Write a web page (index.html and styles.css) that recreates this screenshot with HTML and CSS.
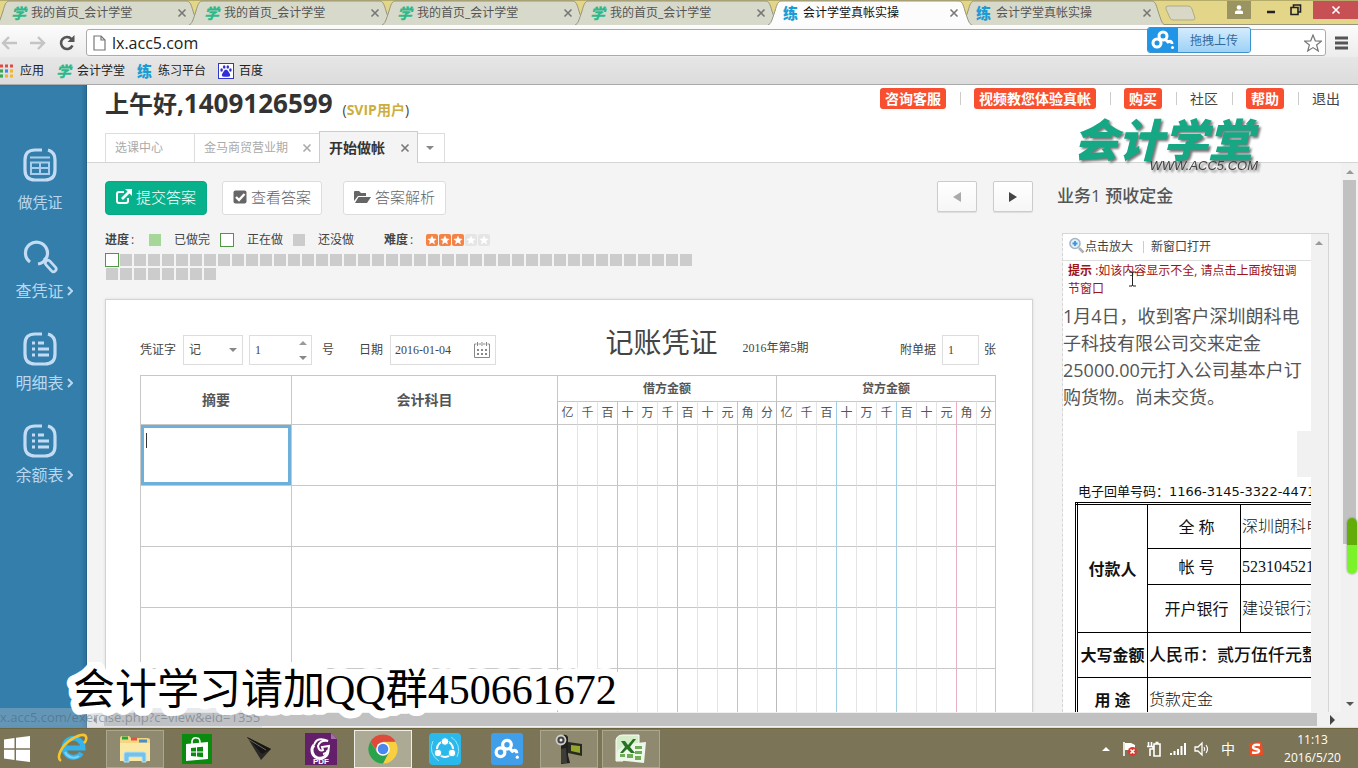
FILE: index.html
```html
<!DOCTYPE html>
<html lang="zh-CN">
<head>
<meta charset="utf-8">
<title>会计学堂真帐实操</title>
<link rel="stylesheet" href="styles.css">
</head>
<body>
<svg class="defs" aria-hidden="true">
  <symbol id="tab-shape" viewBox="0 0 204 25" preserveAspectRatio="none"><path d="M0 25C3 24 4 20 7 11C9 4 10 1 14 1H190C194 1 195 4 197 11C200 20 201 24 204 25" stroke="#98967e"/></symbol>
  <symbol id="cross" viewBox="0 0 10 10"><path d="M1.500 1.500L8.500 8.500M8.500 1.500L1.500 8.500" fill="none" stroke="currentColor" stroke-width="1.600"/></symbol>
  <symbol id="list-icon" viewBox="0 0 36 36"><path d="M20 3H13Q3 3 3 13V23Q3 33 13 33H23Q33 33 33 23V13Q33 5 26 3" fill="none" stroke="#c3dcf3" stroke-width="3.200"/><path d="M10 12h3M16 12h6M10 18h3M16 18h11M10 24h3M16 24h11" stroke="#c3dcf3" stroke-width="2.800"/></symbol>
  <symbol id="star" viewBox="0 0 10 10"><path d="M5 .5L6.300 3.600L9.600 3.900L7.100 6.100L7.900 9.400L5 7.600L2.100 9.400L2.900 6.100L.4 3.900L3.700 3.600Z"/></symbol>
  <symbol id="cloud" viewBox="0 0 24 20"><g fill="none" stroke="#fff" stroke-width="3"><circle cx="6" cy="13" r="4"/><circle cx="12" cy="6" r="4"/><path d="M14 9L17 12Q21 10 21 14"/></g><circle cx="21.500" cy="17.500" r="1.500" fill="#fff"/></symbol>
</svg>

<header class="browser">
  <div class="tabstrip">
    <div class="btab"><svg class="btab-bg"><use href="#tab-shape"/></svg><span class="fav xue">学</span><span class="btab-text">我的首页_会计学堂</span><button class="x" aria-label="关闭"><svg><use href="#cross"/></svg></button></div>
    <div class="btab"><svg class="btab-bg"><use href="#tab-shape"/></svg><span class="fav xue">学</span><span class="btab-text">我的首页_会计学堂</span><button class="x" aria-label="关闭"><svg><use href="#cross"/></svg></button></div>
    <div class="btab"><svg class="btab-bg"><use href="#tab-shape"/></svg><span class="fav xue">学</span><span class="btab-text">我的首页_会计学堂</span><button class="x" aria-label="关闭"><svg><use href="#cross"/></svg></button></div>
    <div class="btab"><svg class="btab-bg"><use href="#tab-shape"/></svg><span class="fav xue">学</span><span class="btab-text">我的首页_会计学堂</span><button class="x" aria-label="关闭"><svg><use href="#cross"/></svg></button></div>
    <div class="btab current"><svg class="btab-bg"><use href="#tab-shape"/></svg><span class="fav lian">练</span><span class="btab-text">会计学堂真帐实操</span><button class="x" aria-label="关闭"><svg><use href="#cross"/></svg></button></div>
    <div class="btab"><svg class="btab-bg"><use href="#tab-shape"/></svg><span class="fav lian">练</span><span class="btab-text">会计学堂真帐实操</span><button class="x" aria-label="关闭"><svg><use href="#cross"/></svg></button></div>
    <button class="newtab" aria-label="新标签页"><svg width="34" height="18" viewBox="0 0 34 18"><path d="M5 2H25Q28 2 29 5L32 14Q32 16 30 16H10Q8 16 7 14L3 5Q2 2 5 2Z" fill="#d9d8c6" stroke="#b0ab86"/></svg></button>
    <div class="winctl">
      <button class="user" aria-label="用户"><svg width="10" height="10" viewBox="0 0 10 10"><circle cx="5" cy="2.500" r="2.300" fill="#fff"/><path d="M1 9V7Q1 5.500 3 5.500H7Q9 5.500 9 7V9Z" fill="#fff"/></svg></button>
      <button class="min" aria-label="最小化"><svg width="10" height="10" viewBox="0 0 10 10"><path d="M1 7H9" stroke="#222" stroke-width="2.500"/></svg></button>
      <button class="max" aria-label="还原"><svg width="12" height="12" viewBox="0 0 12 12"><path d="M1 3.500H8V10.500H1ZM3.500 3V1H10.500V8H8.500" fill="none" stroke="#222" stroke-width="1.600"/></svg></button>
      <button class="close" aria-label="关闭窗口"><svg><use href="#cross"/></svg></button>
    </div>
  </div>
  <div class="navbar">
    <button class="nav" aria-label="后退"><svg width="18" height="16" viewBox="0 0 18 16"><path d="M9 2L3 8L9 14M3 8H17" fill="none" stroke="#c4c4c6" stroke-width="2.400"/></svg></button>
    <button class="nav" aria-label="前进"><svg width="18" height="16" viewBox="0 0 18 16"><path d="M9 2L15 8L9 14M15 8H1" fill="none" stroke="#c4c4c6" stroke-width="2.400"/></svg></button>
    <button class="nav" aria-label="刷新"><svg width="18" height="18" viewBox="0 0 18 18"><path d="M14.500 11.500A6 6 0 1 1 13.500 5" fill="none" stroke="#555" stroke-width="2.600"/><path d="M16.500 1V8H9.500Z" fill="#555"/></svg></button>
    <div class="omnibox">
      <svg width="13" height="16" viewBox="0 0 13 16"><path d="M1 1H8L12 5V15H1ZM8 1V5H12" fill="#fff" stroke="#777" stroke-width="1.200"/></svg>
      <input type="text" aria-label="地址" value="lx.acc5.com">
      <svg width="18" height="18" viewBox="0 0 18 18"><path d="M9 1L11.300 6.800L17.400 7.100L12.600 11L14.300 17L9 13.600L3.700 17L5.400 11L.6 7.100L6.700 6.800Z" fill="#fff" stroke="#777" stroke-width="1.200"/></svg>
      <button class="upload"><span class="upload-icon"><svg width="24" height="20"><use href="#cloud"/></svg></span><span class="upload-text">拖拽上传</span></button>
    </div>
    <button class="menu" aria-label="菜单"><svg width="14" height="14" viewBox="0 0 14 14"><path d="M0 2H13M0 7H13M0 12H13" stroke="#555" stroke-width="3"/></svg></button>
  </div>
  <nav class="bookmarks">
    <a href="#"><svg width="16" height="14" viewBox="0 0 16 14"><g stroke-width="3.200"><path d="M0 2H3M5 2H8M10 2H13" stroke="#de4b43"/><path d="M0 7H3" stroke="#3aa757"/><path d="M5 7H8" stroke="#4285f4"/><path d="M10 7H13" stroke="#f2b52f"/><path d="M0 12H3" stroke="#3aa757"/><path d="M5 12H8M10 12H13" stroke="#f2b52f"/></g></svg>应用</a>
    <a href="#"><span class="fav xue">学</span>会计学堂</a>
    <a href="#"><span class="fav lian">练</span>练习平台</a>
    <a href="#"><svg width="16" height="16" viewBox="0 0 16 16"><rect x=".5" y=".5" width="15" height="15" fill="#fff" stroke="#3238c8"/><g fill="#3030d8"><ellipse cx="3.600" cy="7" rx="1.300" ry="1.800"/><ellipse cx="6.200" cy="4" rx="1.300" ry="1.800"/><ellipse cx="9.800" cy="4" rx="1.300" ry="1.800"/><ellipse cx="12.400" cy="7" rx="1.300" ry="1.800"/><path d="M8 6.500Q10 7 11 9.500Q13 12 11.500 13.500Q8 14 4.500 13.500Q3 12 5 9.500Q6 7 8 6.500Z"/></g></svg>百度</a>
  </nav>
</header>

<div class="viewport">
  <nav class="sidebar">
    <a href="#"><svg class="side-icon" viewBox="0 0 36 36"><path d="M20 3H13Q3 3 3 13V23Q3 33 13 33H23Q33 33 33 23V13Q33 5 26 3" fill="none" stroke="#c3dcf3" stroke-width="3.200"/><path d="M8 10.500H28M9 15.500H27V27H9ZM9 21H27M18 15.500V27" fill="none" stroke="#a9cdec" stroke-width="2"/></svg><span>做凭证</span></a>
    <a href="#"><svg class="side-icon" viewBox="0 0 36 36"><path d="M8 23A11 11 0 1 1 16 25" fill="none" stroke="#c3dcf3" stroke-width="3.200"/><path d="M22 19L25 22" stroke="#c3dcf3" stroke-width="3"/><path d="M26 24L31.500 30" stroke="#c3dcf3" stroke-width="8" stroke-linecap="round"/><path d="M26 24L31.500 30" stroke="#347eab" stroke-width="2.600" stroke-linecap="round"/></svg><span>查凭证<svg class="chev" viewBox="0 0 6 10"><path d="M1 1L5 5L1 9"/></svg></span></a>
    <a href="#"><svg class="side-icon"><use href="#list-icon"/></svg><span>明细表<svg class="chev" viewBox="0 0 6 10"><path d="M1 1L5 5L1 9"/></svg></span></a>
    <a href="#"><svg class="side-icon"><use href="#list-icon"/></svg><span>余额表<svg class="chev" viewBox="0 0 6 10"><path d="M1 1L5 5L1 9"/></svg></span></a>
  </nav>

  <main class="app">
    <header class="top">
      <div class="greet-row">
        <h1>上午好,<span class="num">1409126599</span></h1><span class="svip">(<b>SVIP用户</b>)</span>
        <nav class="links">
          <a class="hot" href="#">咨询客服</a><i></i><a class="hot" href="#">视频教您体验真帐</a><i></i><a class="hot" href="#">购买</a><i></i><a href="#">社区</a><i></i><a class="hot" href="#">帮助</a><i></i><a href="#">退出</a>
        </nav>
      </div>
      <div class="pagetabs">
        <button class="ptab first">选课中心</button>
        <button class="ptab second">金马商贸营业期<svg class="px"><use href="#cross"/></svg></button>
        <button class="ptab on">开始做帐<svg class="px"><use href="#cross"/></svg></button>
        <button class="ptab more" aria-label="更多"><span class="tri"></span></button>
      </div>
      <div class="logo"><span class="logo-cn">会计学堂</span><span class="logo-url">WWW.ACC5.COM</span></div>
    </header>

    <div class="body">
      <section class="work">
        <div class="actions">
          <button class="act primary"><svg width="18" height="16" viewBox="0 0 18 16"><path d="M9 3H4Q2 3 2 5V12Q2 14 4 14H11Q13 14 13 12V9" fill="none" stroke="#fff" stroke-width="2"/><path d="M7 10L14 3" stroke="#fff" stroke-width="2.600"/><path d="M10 0H17V7Z" fill="#fff"/></svg>提交答案</button>
          <button class="act view"><svg width="14" height="14" viewBox="0 0 14 14"><rect x=".5" y=".5" width="13" height="13" rx="2" fill="#666"/><path d="M3 7L6 10L11.500 4" fill="none" stroke="#fff" stroke-width="2.400"/></svg>查看答案</button>
          <button class="act explain"><svg width="17" height="14" viewBox="0 0 17 14"><path d="M0 11V2Q0 1 1 1H5L7 3H12V6H4Z" fill="#666"/><path d="M4.500 7H17L13 13H1Z" fill="#666"/></svg>答案解析</button>
          <button class="step prev" aria-label="上一题"><span></span></button>
          <button class="step next" aria-label="下一题"><span></span></button>
        </div>
        <div class="legend">
          <b>进度</b><span class="colon">:</span><i class="sq done"></i><span class="lg">已做完</span><i class="sq doing"></i><span class="lg">正在做</span><i class="sq"></i><span class="lg">还没做</span>
          <b class="diff">难度</b><span class="colon">:</span>
          <span class="stars"><svg class="st on"><use href="#star"/></svg><svg class="st on"><use href="#star"/></svg><svg class="st on"><use href="#star"/></svg><svg class="st"><use href="#star"/></svg><svg class="st"><use href="#star"/></svg></span>
        </div>
        <div class="progress">
          <i class="now"></i><i></i><i></i><i></i><i></i><i></i><i></i><i></i><i></i><i></i><i></i><i></i><i></i><i></i><i></i><i></i><i></i><i></i><i></i><i></i><i></i><i></i><i></i><i></i><i></i><i></i><i></i><i></i><i></i><i></i><i></i><i></i><i></i><i></i><i></i><i></i><i></i><i></i><i></i><i></i><i></i><i></i><i></i><i></i><i></i><i></i><i></i><i></i><i></i><i></i>
        </div>
        <div class="voucher">
          <form class="vhead">
            <label for="word">凭证字</label>
            <span class="selectbox"><select id="word"><option>记</option></select><span class="tri"></span></span>
            <span class="numbox"><input id="no" type="text" value="1"><span class="spin"><span class="tri up"></span><span class="tri"></span></span></span>
            <label class="hao" for="no">号</label>
            <label class="date-label" for="date">日期</label>
            <span class="datebox"><input id="date" type="text" value="2016-01-04"><svg width="18" height="18" viewBox="0 0 18 18"><path d="M3.500 3H1.500V16.500H16.500V3H14.500M5.500 3H8M10 3H12.500M4.500 1V5M9 1V5M13.500 1V5" fill="none" stroke="#888"/><path d="M4 9H6M8 9H10M12 9H14M4 13H6M8 13H10M12 13H14" stroke="#888" stroke-width="2"/></svg></span>
            <h2>记账凭证</h2>
            <span class="period">2016年第5期</span>
            <label class="att" for="att">附单据</label>
            <input class="attbox" id="att" type="text" value="1">
            <span class="zhang">张</span>
          </form>
          <table class="vt">
            <colgroup><col class="c1"><col class="c2"><col span="10" class="cd"><col class="cl"><col span="10" class="cd"><col class="cl"></colgroup>
            <thead>
              <tr><th rowspan="2">摘要</th><th rowspan="2">会计科目</th><th class="amt" colspan="11">借方金额</th><th class="amt" colspan="11">贷方金额</th></tr>
              <tr class="units"><th class="g">亿</th><th>千</th><th>百</th><th class="b">十</th><th>万</th><th>千</th><th class="b">百</th><th>十</th><th>元</th><th class="p">角</th><th>分</th><th class="g">亿</th><th>千</th><th>百</th><th class="b">十</th><th>万</th><th>千</th><th class="b">百</th><th>十</th><th>元</th><th class="p">角</th><th>分</th></tr>
            </thead>
            <tbody>
              <tr><td class="edit"><textarea aria-label="摘要"></textarea><span class="caret"></span></td><td></td><td class="g"></td><td></td><td></td><td class="b"></td><td></td><td></td><td class="b"></td><td></td><td></td><td class="p"></td><td></td><td class="g"></td><td></td><td></td><td class="b"></td><td></td><td></td><td class="b"></td><td></td><td></td><td class="p"></td><td></td></tr>
              <tr><td></td><td></td><td class="g"></td><td></td><td></td><td class="b"></td><td></td><td></td><td class="b"></td><td></td><td></td><td class="p"></td><td></td><td class="g"></td><td></td><td></td><td class="b"></td><td></td><td></td><td class="b"></td><td></td><td></td><td class="p"></td><td></td></tr>
              <tr><td></td><td></td><td class="g"></td><td></td><td></td><td class="b"></td><td></td><td></td><td class="b"></td><td></td><td></td><td class="p"></td><td></td><td class="g"></td><td></td><td></td><td class="b"></td><td></td><td></td><td class="b"></td><td></td><td></td><td class="p"></td><td></td></tr>
              <tr><td></td><td></td><td class="g"></td><td></td><td></td><td class="b"></td><td></td><td></td><td class="b"></td><td></td><td></td><td class="p"></td><td></td><td class="g"></td><td></td><td></td><td class="b"></td><td></td><td></td><td class="b"></td><td></td><td></td><td class="p"></td><td></td></tr>
              <tr><td></td><td></td><td class="g"></td><td></td><td></td><td class="b"></td><td></td><td></td><td class="b"></td><td></td><td></td><td class="p"></td><td></td><td class="g"></td><td></td><td></td><td class="b"></td><td></td><td></td><td class="b"></td><td></td><td></td><td class="p"></td><td></td></tr>
            </tbody>
          </table>
        </div>
      </section>

      <aside class="task">
        <h3>业务1 预收定金</h3>
        <div class="frame">
          <div class="doc">
            <div class="doc-bar"><svg width="17" height="17" viewBox="0 0 17 17"><circle cx="7" cy="6.500" r="5" fill="#dff0fb" stroke="#a5b4c4" stroke-width="1.600"/><path d="M4.500 6.500H9.500M7 4V9" stroke="#3b97d8" stroke-width="1.800"/><path d="M11 11L15.500 15.500" stroke="#b3aeb0" stroke-width="2.600"/></svg><a href="#">点击放大</a><i></i><a href="#">新窗口打开</a></div>
            <p class="hint"><b>提示</b> :如该内容显示不全, 请点击上面按钮调节窗口</p>
            <p class="desc">1月4日，收到客户深圳朗科电<br>子科技有限公司交来定金<br>25000.00元打入公司基本户订<br>购货物。尚未交货。</p>
            <div class="patch"></div>
            <div class="receipt">
              <p>电子回单号码：<span class="code">1166-3145-3322-4471</span></p>
              <table class="rt">
                <tr class="r1"><th rowspan="3">付款人</th><td class="k">全 称</td><td class="song">深圳朗科电子科技</td></tr>
                <tr class="r2"><td class="k">帐 号</td><td class="song">5231045218</td></tr>
                <tr class="r3"><td class="k">开户银行</td><td class="song">建设银行深圳分行</td></tr>
                <tr class="r4"><th>大写金额</th><td class="big" colspan="2">人民币：贰万伍仟元整</td></tr>
                <tr class="r4"><th>用 途</th><td class="song" colspan="2">货款定金</td></tr>
              </table>
            </div>
          </div>
          <div class="doc-scroll"><span class="tri up"></span></div>
        </div>
      </aside>
      <div class="vscroll"><span class="tri up"></span><div class="vthumb"></div><span class="tri dark"></span></div>
    </div>
    <div class="hscroll"><span class="tri left"></span><div class="hthumb"></div><span class="tri right"></span></div>
  </main>
  <div class="status">x.acc5.com/exercise.php?c=view&amp;eid=1355</div>
  <div class="volume"></div>
  <svg class="caption" width="570" height="64"><text x="12" y="42">会计学习请加QQ群450661672</text></svg>
  <svg class="ibeam" viewBox="0 0 9 16"><path d="M1 1H4L4.500 2L5 1H8M4.500 2V14M1 15H4L4.500 14L5 15H8" fill="none" stroke="#222"/></svg>
</div>

<footer class="taskbar">
  <button class="tk" aria-label="开始"><svg width="28" height="26" viewBox="0 0 28 26"><path d="M1 3.500L11.500 2V12.200H1ZM13 1.800L27 0V12.200H13ZM1 13.700H11.500V24L1 22.500ZM13 13.700H27V26L13 24.200Z" fill="#fff"/></svg></button>
  <button class="tk" aria-label="Internet Explorer"><svg width="32" height="32" viewBox="0 0 32 32"><path d="M24.500 20A9.500 9.500 0 1 1 26 15H9" fill="none" stroke="#35b4ec" stroke-width="5"/><path d="M22 23A9.500 9.500 0 0 1 8 19" fill="none" stroke="#76d5f8" stroke-width="2"/><path d="M4 28C-1 25 4 14 12 8C20 2 28 0 29 4C30 6 28 9 27 10" fill="none" stroke="#f6c52c" stroke-width="2.600"/></svg></button>
  <button class="tk box" aria-label="资源管理器"><svg width="32" height="30" viewBox="0 0 32 30"><path d="M1 5Q1 2 3 2H10L12 4H28Q31 4 31 6V26H1Z" fill="#f3d682"/><path d="M3 4H9" stroke="#28a33f" stroke-width="3"/><path d="M12 5H18" stroke="#e05441" stroke-width="3"/><path d="M20 7H28" stroke="#458fcf" stroke-width="3"/><path d="M1 9H31V27H1Z" fill="#fae8a5"/><path d="M5 28V20Q5 18 7 18H25Q27 18 27 20V28H23V23H10V28Z" fill="#74c1ea" stroke="#b6e3f8"/></svg></button>
  <button class="tk" aria-label="应用商店"><svg width="30" height="30" viewBox="0 0 30 30"><path d="M0 0H30V30H0Z" fill="#0a8a0f"/><path d="M4 10L26 8V25L4 27Z" fill="#fff"/><path d="M10 10V7Q11 3 15 4Q18 4 18 9" fill="none" stroke="#fff" stroke-width="1.600"/><path d="M9 14L14 13.500V17.500H9ZM15 13.300L21 12.700V17.500H15ZM9 18.500H14V22.500L9 22ZM15 18.500H21V23.300L15 22.600Z" fill="#0a8a0f"/></svg></button>
  <button class="tk" aria-label="工具"><svg width="30" height="26" viewBox="0 0 30 26"><path d="M3 1L27 13L17 24Z" fill="#2b2927"/><path d="M3 1L18 18L27 13Z" fill="#171615"/><path d="M4 3L22 14" stroke="#6a6660"/></svg></button>
  <button class="tk" aria-label="PDF"><svg width="32" height="32" viewBox="0 0 32 32"><path d="M0 0H26L32 6V32H0Z" fill="#641f6b"/><path d="M26 0V6H32Z" fill="#a36fa9"/><path d="M9 12A8 8 0 1 0 23 17" fill="none" stroke="#fff" stroke-width="3"/><path d="M9 12Q12 3 23 8Q15 7 13 13Q14 19 18 17L17 14L24 13Q24 20 18 21" fill="none" stroke="#fff" stroke-width="2"/><text x="16" y="31" text-anchor="middle" class="pdf">PDF</text></svg></button>
  <button class="tk box lit" aria-label="Chrome"><svg width="30" height="30" viewBox="0 0 30 30"><path d="M15 15V7.700H27.600A14.500 14.500 0 0 1 15 29.500L21 18Z" fill="#f8cf3e"/><path d="M15 15L21 18L15 29.500A14.500 14.500 0 0 1 2.400 7.700L9 18Z" fill="#2ba24c"/><path d="M2.400 7.700A14.500 14.500 0 0 1 27.600 7.700H15L9 17Z" fill="#df4b3b"/><circle cx="15" cy="15" r="6.800" fill="#fff"/><circle cx="15" cy="15" r="5.300" fill="#4a87ee"/></svg></button>
  <button class="tk" aria-label="共享"><svg width="32" height="32" viewBox="0 0 32 32"><rect width="32" height="32" rx="4" fill="#2bb9ec"/><circle cx="16" cy="16" r="8" fill="none" stroke="#fff" stroke-width="2"/><g fill="#fff" stroke="#2bb9ec"><circle cx="16" cy="8.500" r="3.800"/><circle cx="9" cy="20" r="3.800"/><circle cx="23" cy="20" r="3.800"/></g><path d="M4 8A15 15 0 0 0 10 28M28 24A15 15 0 0 0 22 4" fill="none" stroke="#9ae5fa"/></svg></button>
  <button class="tk" aria-label="云管家"><svg width="32" height="32" viewBox="0 0 32 32"><rect width="32" height="32" rx="3" fill="#419fea"/><svg x="3" y="5" width="26" height="22"><use href="#cloud"/></svg></svg></button>
  <button class="tk box" aria-label="录像"><svg width="28" height="32" viewBox="0 0 28 32"><path d="M6 3Q11 0 13 4V22L15 30L6 31Z" fill="#20201e"/><path d="M6 16L11 15L12 30H6Z" fill="#3c3c38"/><circle cx="6" cy="7" r="4.500" fill="#444" stroke="#d0d0ca" stroke-width="1.800"/><circle cx="6" cy="7" r="1.500" fill="#eee"/><path d="M13 9L27 11V23L13 20Z" fill="#2a2b20"/><path d="M16 12L25 13V20L16 18Z" fill="#94a62b"/></svg></button>
  <button class="tk box" aria-label="Excel"><svg width="32" height="30" viewBox="0 0 32 30"><path d="M1 27V6Q2 1 8 1H24V12L8 14V27Z" fill="#d5edc8" stroke="#fff"/><path d="M12 10L31 8L29 29L1 26L3 16Z" fill="#eef7ea"/><path d="M20 12H27V15H20ZM20 17H27V20H20ZM20 22H26V26H20ZM5 20H10V23H5ZM12 20H18V24H12Z" fill="#6cae55"/><path d="M6 7L10 7L13 11L18 5H21L15 13L20 19H16L12 15L8 19H5L10 13Z" fill="#267322"/></svg></button>
  <div class="tray">
    <span class="tri up white"></span>
    <svg width="16" height="16" viewBox="0 0 16 16"><path d="M2 1V15" stroke="#fff" stroke-width="1.600"/><path d="M3 2H9L13 4V9H3Z" fill="#fff"/><circle cx="10.500" cy="10.500" r="4.500" fill="#dc3832"/><path d="M8.500 8.500L12.500 12.500M12.500 8.500L8.500 12.500" stroke="#fff" stroke-width="1.600"/></svg>
    <svg width="16" height="16" viewBox="0 0 16 16"><path d="M8 3H14V15H8ZM9.500 1.500H12.500M2.500 1V5M5.500 1V5M1 5.500H7V8H4V15" fill="none" stroke="#fff" stroke-width="1.600"/></svg>
    <svg width="16" height="16" viewBox="0 0 16 16"><path d="M1 14V12M4.500 14V10M8 14V8M11.500 14V5M15 14V2" stroke="#fff" stroke-width="2"/></svg>
    <svg width="16" height="16" viewBox="0 0 16 16"><path d="M1 6H4L8 2V14L4 10H1Z" fill="none" stroke="#fff" stroke-width="1.300"/><path d="M10 6Q11.500 8 10 10M12 4Q15 8 12 12" fill="none" stroke="#fff" stroke-width="1.200"/></svg>
    <span class="ime">中</span>
    <svg width="16" height="16" viewBox="0 0 16 16"><path d="M1 2L14 1L15 14L2 15Z" fill="#ee4c23"/><path d="M12 4Q5 3 5 6Q5 7.500 8 8Q11.500 8.500 11 10.500Q10 12.500 4 11.500" fill="none" stroke="#fff" stroke-width="2.400"/></svg>
    <time class="clock">11:13<br>2016/5/20</time>
  </div>
</footer>
</body>
</html>
```
FILE: styles.css
```css
* { box-sizing: border-box; }
html, body { height: 100%; }
body {
  margin: 0;
  display: flex;
  flex-direction: column;
  overflow: hidden;
  font: 12px/18px "Open Sans", "Noto Sans CJK SC", sans-serif;
  color: #444;
}
button, input, select, textarea { font: inherit; color: inherit; margin: 0; padding: 0; border: 0; background: none; outline: 0; }
a { color: inherit; text-decoration: none; }
h1, h2, h3, p { margin: 0; }
svg { flex: none; }
.defs { position: absolute; width: 0; height: 0; }
.tri { width: 0; height: 0; border: 4px solid transparent; border-bottom: 0; border-top-color: #888; flex: none; }
.tri.up { border: 4px solid transparent; border-top: 0; border-bottom-color: #999; }
.tri.dark { border-top-color: #555; }
.tri.left { border: 4px solid transparent; border-left: 0; border-right-color: #999; }
.tri.right { border: 5px solid transparent; border-right: 0; border-left-color: #444; }
.tri.white { border-bottom-color: #fff; }

/* browser chrome */
.browser { flex: none; }
.tabstrip { display: flex; height: 25px; background: #e3d688; border-bottom: 1px solid #98967e; border-top: 1px solid #b5ac6c; }
.btab { position: relative; display: flex; align-items: center; flex: none; width: 204px; height: 25px; margin: -1px -11px 0 0; padding-left: 15px; color: #555; fill: #d7d9cb; z-index: 1; }
.btab:first-child { margin-left: -4px; }
.btab.current { color: #111; fill: #fcfcfc; z-index: 2; }
.btab-bg { position: absolute; left: 0; top: 0; width: 204px; height: 25px; z-index: -1; }
.btab-text { margin-left: 4px; width: 146px; white-space: nowrap; }
.fav { width: 16px; flex: none; font-weight: 900; font-size: 15px; line-height: 16px; }
.fav.xue { color: #2fb98b; font-style: italic; }
.fav.lian { color: #1b9cd4; }
.x { width: 10px; height: 10px; display: flex; color: #777; }
.x svg { width: 10px; height: 10px; }
.newtab { display: flex; margin: 3px 0 0 9px; width: 34px; height: 18px; }
.winctl { display: flex; margin-left: auto; height: 18px; }
.winctl button { display: flex; align-items: center; justify-content: center; width: 26px; height: 18px; }
.winctl .user { width: 24px; background: #9a9463; margin-right: 8px; }
.winctl .min { width: 24px; }
.winctl .max { margin-right: 4px; }
.winctl .close { width: 45px; background: #c65054; color: #fff; }
.close svg { width: 10px; height: 10px; }
.navbar { display: flex; align-items: center; height: 32px; padding-top: 3px; background: linear-gradient(#fcfcfc, #ececec); }
.nav { display: flex; margin-right: 11px; width: 18px; }
.omnibox { position: relative; display: flex; align-items: center; flex: 1; height: 27px; margin-left: -1px; padding: 0 3px 0 6px; background: #fff; border: 1px solid #aaa; border-radius: 3px; }
.omnibox input { flex: 1; min-width: 0; margin-left: 6px; font-size: 16px; line-height: 24px; color: #222; }
.upload { position: absolute; right: 74px; top: -3px; display: flex; width: 104px; height: 26px; border: 1px solid #3b92cf; border-radius: 3px; background: #b5ddf9; overflow: hidden; color: #33699b; }
.upload-icon { width: 30px; height: 24px; padding: 2px 3px; background: #2095e6; }
.upload-text { flex: 1; line-height: 26px; background: linear-gradient(#d4ecfd, #9dd1f6); }
.menu { display: flex; width: 32px; padding-left: 9px; }
.bookmarks { display: flex; align-items: center; gap: 12px; height: 28px; background: linear-gradient(#e6e6e6, #dcdcdc); border-bottom: 1px solid #aaa; color: #222; }
.bookmarks a { display: flex; align-items: center; gap: 5px; }
.bookmarks a:first-child { gap: 4px; }

/* application */
.viewport { position: relative; display: flex; flex: 1; min-height: 0; }
.sidebar { display: flex; flex-direction: column; align-items: flex-start; gap: 28px; width: 87px; flex: none; padding-top: 62px; background: #347eab; border-right: 1px solid #24608a; box-shadow: inset -3px 0 3px #2d729c; }
.sidebar a { width: 80px; padding-bottom: 3px; color: #b9d8f0; font-size: 16px; line-height: 18px; text-align: center; }
.side-icon { display: block; width: 36px; height: 36px; margin: 0 auto 7px; }
.sidebar a:first-child { padding-bottom: 0; font-size: 15px; }
.sidebar a:first-child .side-icon { margin-bottom: 10px; }
.sidebar span { display: flex; align-items: center; justify-content: center; gap: 3px; padding-left: 8px; height: 18px; }
.sidebar a:first-child span { padding-left: 0; }
.chev { width: 6px; height: 10px; fill: none; stroke: #b9d8f0; stroke-width: 2; }
.app { display: flex; flex-direction: column; flex: 1; min-width: 0; background: #f4f4f4; }
.top { position: relative; flex: none; background: #fff; border-bottom: 1px solid #d5d5d5; padding-left: 18px; }
.greet-row { display: flex; height: 47px; }
h1 { font-size: 24px; line-height: 36px; color: #333; }
.num { font-size: 26px; }
.svip { margin: 15px 0 0 10px; font-size: 14px; line-height: 20px; }
.svip b { color: #cdae3d; font-weight: 700; }
.links { display: flex; margin: 3px 18px 0 auto; height: 21px; align-items: center; font-size: 14px; line-height: 21px; }
.links i { width: 1px; height: 13px; background: #ccc; margin: 0 13px 0 14px; }
.links .hot { background: #f84f30; color: #fff; font-weight: 600; border-radius: 3px; padding: 0 5px; }
.pagetabs { display: flex; align-items: flex-end; height: 31px; margin-bottom: -1px; }
.ptab { display: flex; align-items: center; height: 29px; border: 1px solid #ddd; border-width: 1px 0 0 1px; color: #aaa; padding-left: 9px; margin-bottom: 1px; white-space: nowrap; }
.first { width: 89px; }
.second { width: 125px; }
.px { width: 10px; height: 10px; margin-left: 14px; color: #aaa; }
.ptab.on { width: 99px; height: 32px; margin-bottom: 0; background: #f4f4f4; border: 1px solid #ccc; border-bottom: 0; color: #333; font-size: 14px; font-weight: 700; position: relative; }
.on .px { margin-left: 15px; color: #777; }
.ptab.more { width: 27px; border-width: 1px 1px 0 0; padding-left: 8px; }
.logo { position: absolute; right: 98px; top: 34px; width: 187px; height: 58px; color: #16a785; filter: drop-shadow(2px 2px 1px #777); }
.logo-cn { display: block; font-size: 45px; line-height: 42px; font-weight: 900; font-style: italic; white-space: nowrap; }
.logo-url { position: absolute; right: 2px; bottom: 4px; font: italic 13px/14px "Liberation Sans", sans-serif; color: #444; }

.body { display: flex; flex: 1; min-height: 0; padding-left: 18px; }
.work { display: flex; flex-direction: column; flex: 1; min-width: 0; padding-top: 18px; }
.actions { display: flex; flex: none; height: 34px; }
.act { display: flex; align-items: center; height: 34px; padding: 0 0 2px 10px; gap: 4px; border: 1px solid #ddd; border-radius: 3px; background: #fff; color: #666; font-size: 15px; font-weight: 300; line-height: 30px; white-space: nowrap; }
.primary { width: 102px; padding-left: 9px; gap: 3px; background: #06b18b; border-color: #06a984; color: #fff; margin-right: 15px; border-radius: 4px; }
.view { width: 100px; margin-right: 21px; }
.explain { width: 103px; }
.step { display: flex; align-items: center; justify-content: center; width: 40px; height: 31px; border: 1px solid #ccc; border-radius: 2px; background: linear-gradient(#fff, #f6f6f6); box-shadow: 0 1px 1px #ddd; }
.prev { margin: 0 16px 0 auto; }
.step span { border: 5px solid transparent; }
.prev span { border-left: 0; border-right: 8px solid #aaa; }
.next span { border-right: 0; border-left: 8px solid #444; }
.legend { display: flex; align-items: center; flex: none; height: 18px; margin-top: 16px; }
.legend b { font-weight: 600; }
.colon { width: 20px; padding-left: 2px; }
.sq { width: 12px; height: 12px; background: #ccc; }
.done { background: #a5d898; }
.sq.doing { width: 14px; height: 14px; background: #fff; border: 1px solid #519643; }
.lg { margin: 0 10px 0 13px; }
.diff { margin-left: 20px; }
.diff + .colon { width: 18px; }
.stars { display: flex; gap: 1px; }
.st { width: 12px; height: 12px; padding: 1px; fill: #fff; background: #e5e5e5; border-radius: 2px; }
.st.on { background: #f58345; }
.progress { display: grid; grid-template-columns: repeat(42, 12px); grid-auto-rows: 12px; gap: 2px; padding: 5px 0 0 1px; flex: none; }
.progress i { background: #ccc; }
.progress .now { width: 14px; height: 14px; margin: -1px; background: #fff; border: 1px solid #519643; position: relative; }
.voucher { flex: 1; min-height: 0; overflow: hidden; margin-top: 19px; padding: 27px 36px 0 34px; background: #fff; border: 1px solid #d3d3d3; border-bottom: 0; box-shadow: 0 0 3px #ddd; }
.vhead { display: flex; align-items: center; height: 46px; margin-bottom: 2px; }
.selectbox, .numbox, .datebox, .attbox { display: flex; align-items: center; height: 30px; border: 1px solid #ddd; padding: 0 5px; background: #fff; }
.selectbox { width: 60px; margin: 0 6px 0 7px; }
select { appearance: none; flex: 1; min-width: 0; }
.vhead input { min-width: 0; flex: 1; font-family: "Liberation Serif", serif; font-size: 12px; }
.numbox { width: 63px; padding: 0 4px 0 5px; }
.spin { display: flex; flex-direction: column; gap: 11px; }
.hao { margin: 0 25px 0 10px; }
.datebox { width: 106px; margin-left: 7px; padding: 0 4px; }
h2 { margin: -16px 25px 0 auto; padding-left: 18px; font-size: 28px; line-height: 32px; font-weight: 400; color: #444; }
.period { margin-top: -5px; font-family: "Liberation Serif", "Noto Sans CJK SC", serif; }
.att { margin-left: auto; }
.vhead .attbox { flex: none; width: 37px; margin: 0 5px 0 6px; }
.vt { width: 100%; border-collapse: separate; border-spacing: 0; table-layout: fixed; border-right: 1px solid #c8c8c8; }
.c1 { width: 151px; }
.cd { width: 20px; }
.cl { width: 19px; }
.vt th, .vt td { padding: 0; border: solid #c8c8c8; border-width: 1px 0 0 1px; }
.vt th { font-size: 14px; color: #555; }
.vt .amt { height: 26px; font-size: 12px; }
.vt .units th { height: 23px; font-size: 12px; font-weight: 400; border-left-color: #e4e4e4; }
.vt td { height: 61px; }
.vt td:nth-child(n+3) { border-left-color: #e4e4e4; }
.vt tr .b:nth-child(n) { border-left-color: #9fd0e6; }
.vt tr .p:nth-child(n) { border-left-color: #e9b0c4; }
.vt tr .g:nth-child(n) { border-left-color: #bbb; }
.edit { position: relative; }
.edit textarea { display: block; width: 100%; height: 60px; border: 3px solid #6eb0da; resize: none; }
.caret { position: absolute; left: 5px; top: 8px; width: 1px; height: 15px; background: #333; }

/* task pane */
.task { display: flex; flex-direction: column; width: 272px; flex: none; margin-left: 24px; }
h3 { margin: 20px 0 24px; font-size: 17px; line-height: 26px; font-weight: 500; color: #555; }
.frame { display: flex; flex: 1; min-height: 0; margin-left: 5px; border: 1px solid #d5d5d5; border-bottom: 0; border-left-style: dashed; background: #f1f1f1; }
.doc { position: relative; flex: 1; min-width: 0; overflow: hidden; background: #fff; }
.doc-bar { display: flex; align-items: center; height: 27px; padding-left: 5px; border-bottom: 1px solid #ddd; }
.doc-bar svg { margin-top: -4px; }
.doc-bar i { width: 1px; height: 12px; margin: 0 7px 0 10px; background: #ccc; }
.hint { padding: 1px 8px 0 5px; color: #a01218; }
.desc { padding-top: 5px; font-size: 18px; line-height: 27px; color: #555; white-space: nowrap; }
.patch { width: 14px; height: 46px; margin: 20px 0 0 auto; background: #f1f1f1; }
.receipt { width: 480px; margin: 5px 0 0 12px; color: #111; }
.receipt p { padding-left: 3px; font-size: 13px; line-height: 18px; margin-bottom: 1px; }
.code { font-family: "DejaVu Sans", sans-serif; font-size: 13px; }
.rt { width: 480px; border-collapse: collapse; border: 3px double #000; font-size: 16px; line-height: 20px; table-layout: fixed; }
.rt th, .rt td { border: 1px solid #000; padding: 0 1px; }
.rt th { width: 71px; padding: 0; font-size: 16px; white-space: nowrap; }
.rt .k { width: 93px; text-align: center; padding-left: 6px; }
.rt .song { font-weight: 300; font-family: "Liberation Serif", "Noto Sans CJK SC", serif; }
.rt .big { font-weight: 500; font-size: 17px; }
.r1 { height: 45px; } .r2 { height: 36px; } .r3 { height: 48px; } .r4 { height: 45px; }
.doc-scroll { width: 17px; padding: 7px 0 0 4px; flex: none; }
.doc-scroll .tri { display: block; }
.vscroll { display: flex; flex-direction: column; align-items: center; width: 17px; margin-left: 12px; padding: 7px 0 6px; background: #f1f1f1; flex: none; }
.vthumb { width: 13px; height: 68%; margin: 6px 0 auto; background: #c1c1c1; }
.hscroll { display: flex; align-items: center; height: 16px; padding: 0 23px 0 6px; background: #f1f1f1; border-bottom: 1px solid #ddd; flex: none; }
.hthumb { flex: 1; height: 13px; margin: 0 13px 0 7px; background: #c1c1c1; }
.status { position: absolute; left: 0; bottom: 0; width: 262px; height: 20px; padding-top: 1px; background: rgba(190, 195, 205, .35); color: rgba(70, 90, 105, .45); white-space: nowrap; font-size: 13px; line-height: 17px; }
.volume { position: absolute; right: 1px; top: 433px; width: 10px; height: 56px; border-radius: 5px; background: linear-gradient(#62ad0a 48%, #7bf32b 48%); box-shadow: 0 0 2px #777; }
.caption { position: absolute; left: 61px; bottom: 2px; font: 42px "Liberation Serif", "Noto Sans CJK SC", serif; fill: #000; stroke: #fff; stroke-width: 16px; paint-order: stroke fill; stroke-linejoin: round; }
.ibeam { position: absolute; left: 1128px; top: 186px; width: 9px; height: 16px; }

/* taskbar */
.taskbar { display: flex; align-items: center; flex: none; height: 40px; background: #7b7456; border-top: 1px solid #6b643f; }
.tk { display: flex; align-items: center; justify-content: center; width: 58px; height: 38px; margin-right: 4px; border: 1px solid transparent; flex: none; }
.tk:first-child { width: 40px; padding-right: 6px; }
.box { background: #8e896f; border-color: #aaa68f; }
.lit { background: #aca994; border-color: #f0efe6; }
.pdf { font: bold 8px "Liberation Sans", sans-serif; fill: #fff; }
.tray { display: flex; align-items: center; gap: 8px; margin-left: auto; padding-right: 15px; color: #fff; }
.tray > .tri { margin-right: 4px; }
.ime { font-size: 14px; margin: 0 5px 0 3px; }
.clock { width: 61px; margin-left: 10px; text-align: center; font-size: 12px; line-height: 18px; white-space: nowrap; }
```
